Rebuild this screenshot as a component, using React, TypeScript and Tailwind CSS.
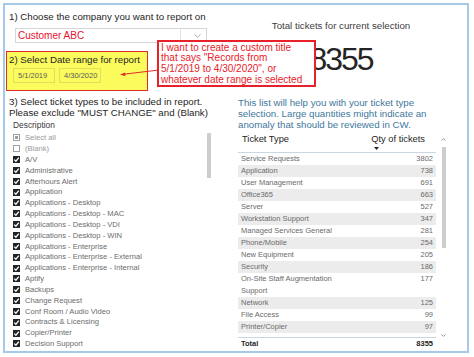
import React from 'react';

const ticketTypes = [
  'Select all',
  '(Blank)',
  'A/V',
  'Administrative',
  'Afterhours Alert',
  'Application',
  'Applications - Desktop',
  'Applications - Desktop - MAC',
  'Applications - Desktop - VDI',
  'Applications - Desktop - WIN',
  'Applications - Enterprise',
  'Applications - Enterprise - External',
  'Applications - Enterprise - Internal',
  'Aptify',
  'Backups',
  'Change Request',
  'Conf Room / Audio Video',
  'Contracts & Licensing',
  'Copier/Printer',
  'Decision Support',
];

const rows: { name: string; qty: number; tall?: boolean }[] = [
  { name: 'Service Requests', qty: 3802 },
  { name: 'Application', qty: 738 },
  { name: 'User Management', qty: 691 },
  { name: 'Office365', qty: 663 },
  { name: 'Server', qty: 527 },
  { name: 'Workstation Support', qty: 347 },
  { name: 'Managed Services General', qty: 281 },
  { name: 'Phone/Mobile', qty: 254 },
  { name: 'New Equipment', qty: 205 },
  { name: 'Security', qty: 186 },
  { name: 'On-Site Staff Augmentation Support', qty: 177, tall: true },
  { name: 'Network', qty: 125 },
  { name: 'File Access', qty: 99 },
  { name: 'Printer/Copier', qty: 97 },
];

function Checkbox({ state }: { state: 'on' | 'off' | 'partial' }) {
  if (state === 'on') {
    return (
      <span className="flex h-[7px] w-[7px] shrink-0 items-center justify-center bg-[#252423]">
        <svg width="7" height="7" viewBox="0 0 7 7">
          <polyline points="1.3,3.6 2.9,5.2 5.8,1.7" fill="none" stroke="#fff" strokeWidth="1.3" />
        </svg>
      </span>
    );
  }
  return (
    <span className="flex h-[7px] w-[7px] shrink-0 items-center justify-center border border-[#a0a0a0] bg-white">
      {state === 'partial' && <span className="h-[3px] w-[3px] bg-[#a0a0a0]" />}
    </span>
  );
}

function Chevron({ up }: { up?: boolean }) {
  return (
    <svg width="5" height="3" viewBox="0 0 5 3">
      <polyline
        points={up ? '0.5,2.6 2.5,0.6 4.5,2.6' : '0.5,0.4 2.5,2.4 4.5,0.4'}
        fill="none"
        stroke="#8a8a8a"
        strokeWidth="0.9"
      />
    </svg>
  );
}

export default function App() {
  return (
    <div className="h-[357px] w-[474px] bg-white p-[3px] font-['Liberation_Sans',Arial,sans-serif]">
      <div className="relative flex h-[350px] w-[466px] border-2 border-[#a6c9ea]">
        {/* Left side: slicers */}
        <div className="flex w-[225px] flex-col">
          <div className="ml-[4px] mt-[6px] text-[9.7px] leading-[12px] text-[#252423]">
            1) Choose the company you want to report on
          </div>

          {/* Company dropdown */}
          <div className="ml-[10px] mt-[5px] flex h-[15px] w-[192px] items-center border border-[#d6d6d6]">
            <span className="flex-1 pl-[2px] text-[10px] leading-none text-[#e8112d]">Customer ABC</span>
            <span className="h-full w-px bg-[#e2e2e2]" />
            <span className="flex w-[25px] items-center justify-center pl-[8px]">
              <svg width="7" height="4" viewBox="0 0 7 4">
                <polyline points="0.5,0.5 3.5,3.3 6.5,0.5" fill="none" stroke="#a0a0a0" strokeWidth="0.9" />
              </svg>
            </span>
          </div>

          {/* Date range, highlighted */}
          <div className="ml-[1px] mt-[8px] h-[40px] w-[142px] border border-[#e02a2a] bg-[#fbfb5e]">
            <div className="pl-[2px] pt-[2px] text-[9.7px] leading-[12px] text-[#252423]">
              2) Select Date range for report
            </div>
            <div className="ml-[6px] mt-[2px] flex gap-[4px]">
              <div className="flex h-[15px] w-[42px] items-center border border-[#e3de5a] pl-[4px] text-[7.5px] text-[#5a5a5a]">
                5/1/2019
              </div>
              <div className="flex h-[15px] w-[42px] items-center border border-[#e3de5a] pl-[4px] text-[7.5px] text-[#5a5a5a]">
                4/30/2020
              </div>
            </div>
          </div>

          <div className="ml-[4px] mt-[5px] text-[9.7px] leading-[11px] text-[#252423]">
            3) Select ticket types to be included in report.
            <br />
            Please exclude "MUST CHANGE" and (Blank)
          </div>

          <div className="ml-[8px] mt-[1.5px] text-[8.4px] leading-[11px] text-[#3b3a39]">Description</div>

          <div className="ml-[8px] mt-[2px] flex">
            <div className="flex w-[194px] flex-col">
              {ticketTypes.map((t, i) => (
                <div key={t} className="flex h-[10.85px] items-center gap-[5px]">
                  <Checkbox state={i === 0 ? 'partial' : i === 1 ? 'off' : 'on'} />
                  <span className={`text-[7.6px] leading-none ${i < 2 ? 'text-[#9a9a9a]' : 'text-[#6b6b6b]'}`}>{t}</span>
                </div>
              ))}
            </div>
            <div className="h-[45px] w-[4px] bg-[#cdcdcd]" />
          </div>
        </div>

        {/* Right side: total and table */}
        <div className="flex flex-1 flex-col">
          <div className="w-[222px] text-center">
            <div className="mt-[15px] text-[9.7px] leading-[12px] text-[#404040]">
              Total tickets for current selection
            </div>
            <div className="mt-[11px] text-[32px] leading-[32px] tracking-[-2px] text-[#252423]">8355</div>
          </div>

          <div className="ml-[8px] mt-[21.5px] text-[9.7px] leading-[11px] text-[#41789c]">
            This list will help you with your ticket type
            <br />
            selection. Large quantities might indicate an
            <br />
            anomaly that should be reviewed in CW.
          </div>

          <div className="ml-[8px] mt-[1.5px] flex gap-[5px]">
            <div className="flex w-[198px] flex-col">
              <div className="flex h-[22px] justify-between border-b border-[#c9d6e3] pl-[4px] pr-[11px] pt-[2.5px] text-[9.3px] leading-[11px] text-[#252423]">
                <span>Ticket Type</span>
                <div className="flex flex-col items-start">
                  <span>Qty of tickets</span>
                  <svg className="ml-[3px] mt-[2px]" width="5" height="3" viewBox="0 0 5 3">
                    <polygon points="0,0 5,0 2.5,3" fill="#252423" />
                  </svg>
                </div>
              </div>
              <div className="h-[184px] overflow-hidden">
                {rows.map((r, i) => (
                  <div
                    key={r.name}
                    className={`flex justify-between pl-[3px] pr-[3px] text-[7.5px] leading-[12px] text-[#6b6b6b] ${
                      r.tall ? 'h-[24px]' : 'h-[12px]'
                    } ${i % 2 === 1 ? 'bg-[#ececec]' : 'bg-white'}`}
                  >
                    <span className={r.tall ? 'w-[100px]' : ''}>{r.name}</span>
                    <span>{r.qty}</span>
                  </div>
                ))}
              </div>
              <div className="flex h-[12px] justify-between border-t border-[#c9d6e3] pl-[3px] pr-[3px] text-[7.5px] font-bold leading-[12px] text-[#252423]">
                <span>Total</span>
                <span>8355</span>
              </div>
            </div>
            <div className="flex w-[5px] flex-col items-center">
              <div className="mt-[6.5px] flex h-[3px]">
                <Chevron up />
              </div>
              <div className="mt-[6.5px] h-[101px] w-[4px] bg-[#cdcdcd]" />
              <div className="mt-[85.5px] flex h-[3px]">
                <Chevron />
              </div>
            </div>
          </div>
        </div>

        {/* Annotation callout */}
        <div className="absolute left-[152px] top-[35px] h-[47px] w-[159px] border-2 border-[#e8202a] bg-white pl-[2px] pt-[0.5px] text-[10px] leading-[10.7px] text-[#e8202a]">
          I want to create a custom title
          <br />
          that says "Records from
          <br />
          5/1/2019 to 4/30/2020", or
          <br />
          whatever date range is selected
        </div>
        <svg className="absolute left-[113px] top-[62px]" width="42" height="12" viewBox="0 0 42 12">
          <line x1="41" y1="3" x2="5" y2="7.3" stroke="#e02a2a" strokeWidth="1" />
          <polygon points="2,7.7 7,5.6 7.4,9" fill="#e02a2a" />
        </svg>
      </div>
    </div>
  );
}
